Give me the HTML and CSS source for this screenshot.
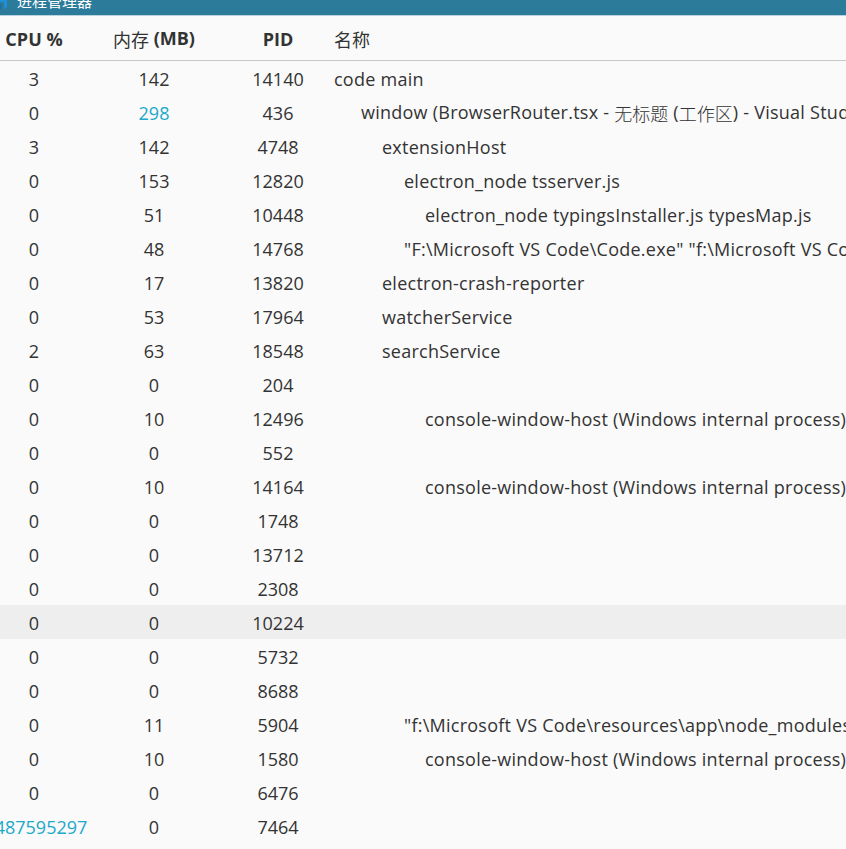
FILE: index.html
```html
<!DOCTYPE html>
<html lang="zh">
<head>
<meta charset="utf-8">
<title>进程管理器</title>
<link rel="stylesheet" href="styles.css">
</head>
<body>
<div class="titlebar">
  <svg class="app-icon" width="10" height="9" viewBox="0 0 10 9"><path d="M0 0 H9 V7 L6 9 V2 H0 Z" fill="#1e90d8"/><path d="M0 3 L3 5 V9 H0 Z" fill="#0b6fb8"/></svg>
  <span class="title-text">进程管理器</span>
</div>
<div class="table">
  <div class="row header">
    <div class="cell">CPU %</div>
    <div class="cell"><span class="cjk">内存</span>&nbsp;(MB)</div>
    <div class="cell">PID</div>
    <div class="cell name"><span class="cjk">名称</span></div>
  </div>
  <div class="row"><div class="cell">3</div><div class="cell">142</div><div class="cell">14140</div><div class="cell name">code main</div></div>
  <div class="row"><div class="cell">0</div><div class="cell hl">298</div><div class="cell">436</div><div class="cell name d1">window (BrowserRouter.tsx -&nbsp;<span class="cjk">无标题</span>&nbsp;(<span class="cjk">工作区</span>) - Visual Studio Code)</div></div>
  <div class="row"><div class="cell">3</div><div class="cell">142</div><div class="cell">4748</div><div class="cell name d2">extensionHost</div></div>
  <div class="row"><div class="cell">0</div><div class="cell">153</div><div class="cell">12820</div><div class="cell name d3">electron_node tsserver.js</div></div>
  <div class="row"><div class="cell">0</div><div class="cell">51</div><div class="cell">10448</div><div class="cell name d4">electron_node typingsInstaller.js typesMap.js</div></div>
  <div class="row"><div class="cell">0</div><div class="cell">48</div><div class="cell">14768</div><div class="cell name d3">"F:\Microsoft VS Code\Code.exe" "f:\Microsoft VS Code\resources\app\extensions\css-language-features\server\dist\node\cssServerMain"</div></div>
  <div class="row"><div class="cell">0</div><div class="cell">17</div><div class="cell">13820</div><div class="cell name d2">electron-crash-reporter</div></div>
  <div class="row"><div class="cell">0</div><div class="cell">53</div><div class="cell">17964</div><div class="cell name d2">watcherService</div></div>
  <div class="row"><div class="cell">2</div><div class="cell">63</div><div class="cell">18548</div><div class="cell name d2">searchService</div></div>
  <div class="row"><div class="cell">0</div><div class="cell">0</div><div class="cell">204</div><div class="cell name d3"></div></div>
  <div class="row"><div class="cell">0</div><div class="cell">10</div><div class="cell">12496</div><div class="cell name d4">console-window-host (Windows internal process)</div></div>
  <div class="row"><div class="cell">0</div><div class="cell">0</div><div class="cell">552</div><div class="cell name d3"></div></div>
  <div class="row"><div class="cell">0</div><div class="cell">10</div><div class="cell">14164</div><div class="cell name d4">console-window-host (Windows internal process)</div></div>
  <div class="row"><div class="cell">0</div><div class="cell">0</div><div class="cell">1748</div><div class="cell name d3"></div></div>
  <div class="row"><div class="cell">0</div><div class="cell">0</div><div class="cell">13712</div><div class="cell name d3"></div></div>
  <div class="row"><div class="cell">0</div><div class="cell">0</div><div class="cell">2308</div><div class="cell name d3"></div></div>
  <div class="row selected"><div class="cell">0</div><div class="cell">0</div><div class="cell">10224</div><div class="cell name d3"></div></div>
  <div class="row"><div class="cell">0</div><div class="cell">0</div><div class="cell">5732</div><div class="cell name d3"></div></div>
  <div class="row"><div class="cell">0</div><div class="cell">0</div><div class="cell">8688</div><div class="cell name d3"></div></div>
  <div class="row"><div class="cell">0</div><div class="cell">11</div><div class="cell">5904</div><div class="cell name d3">"f:\Microsoft VS Code\resources\app\node_modules\vscode-ripgrep\bin\rg.exe"</div></div>
  <div class="row"><div class="cell">0</div><div class="cell">10</div><div class="cell">1580</div><div class="cell name d4">console-window-host (Windows internal process)</div></div>
  <div class="row"><div class="cell">0</div><div class="cell">0</div><div class="cell">6476</div><div class="cell name d3"></div></div>
  <div class="row"><div class="cell hl shift">487595297</div><div class="cell">0</div><div class="cell">7464</div><div class="cell name d3"></div></div>
</div>
</body>
</html>
```
FILE: styles.css
```css
html, body {
  margin: 0;
  padding: 0;
  background: #fafafa;
  overflow: hidden;
}
body {
  font-family: "Open Sans", "Noto Sans", "Noto Sans CJK SC", sans-serif;
  font-size: 18px;
  color: #333333;
  width: 846px;
  height: 849px;
}
.titlebar {
  height: 15px;
  background: #2c7b9b;
  border-bottom: 1px solid #b9d3de;
  overflow: hidden;
  display: flex;
  align-items: flex-start;
  position: relative;
}
.app-icon {
  flex: none;
  margin-left: -2px;
  margin-top: 0;
}
.title-text {
  font-family: "Noto Sans CJK SC", sans-serif;
  color: #ffffff;
  font-size: 15px;
  line-height: 15px;
  margin-left: 9px;
  margin-top: -7px;
}
.table {
  display: flex;
  flex-direction: column;
}
.row {
  display: grid;
  grid-template-columns: 68px 172px 76px 1fr;
  height: 34px;
  box-sizing: border-box;
  padding-top: 2px;
  align-items: center;
  white-space: nowrap;
}
.row.header {
  height: 45px;
  border-bottom: 1px solid #c8c8c8;
  font-weight: 700;
  color: #333333;
}
.row.selected {
  background: #eeeeee;
}
.cell {
  display: flex;
  justify-content: center;
  min-width: 0;
}
.cell.name {
  justify-content: flex-start;
  padding-left: 18px;
  overflow: hidden;
  letter-spacing: 0.25px;
}
.cell.name.d1 { padding-left: 45px; }
.cell.name.d2 { padding-left: 66px; }
.cell.name.d3 { padding-left: 88px; }
.cell.name.d4 { padding-left: 109px; }
.cjk {
  font-family: "Noto Sans CJK SC", sans-serif;
  font-weight: 300;
  letter-spacing: 0;
}
.header .cjk {
  font-weight: 400;
}
.hl {
  color: #21a9c9;
}
.shift {
  padding-left: 14px;
}
```
